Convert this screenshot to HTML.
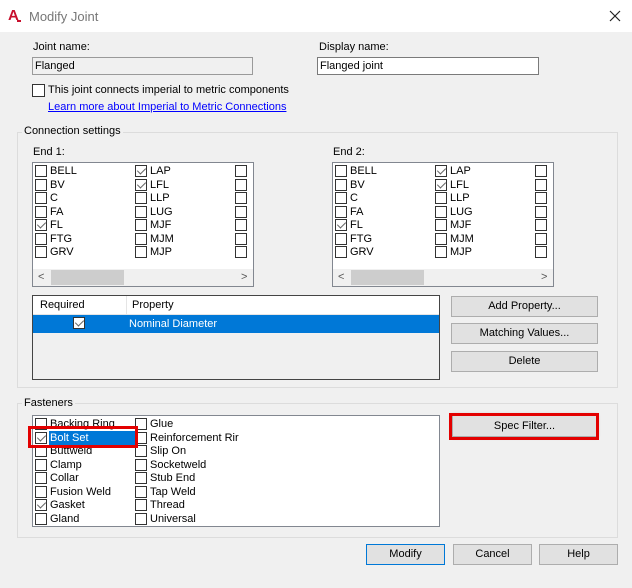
<!DOCTYPE html>
<html><head><style>
*{margin:0;padding:0;box-sizing:border-box}
body{width:632px;height:588px;background:#f0f0f0;font-family:"Liberation Sans",sans-serif;font-size:11px;color:#000;position:relative;overflow:hidden}
.a{position:absolute}
.t{position:absolute;white-space:nowrap;line-height:15px}
.cb{position:absolute;width:12px;height:12px;border:1px solid #333;background:#fff}
.ck::after{content:"";position:absolute;left:3px;top:0px;width:4px;height:7px;border:solid #666;border-width:0 1px 1px 0;transform:rotate(45deg)}
.btn{position:absolute;background:#e1e1e1;border:1px solid #adadad;text-align:center;line-height:19px;font-size:11px}
.grp{position:absolute;border:1px solid #dcdcdc}
.lb{position:absolute;background:#fff;border:1px solid #828790;overflow:hidden}
</style></head><body>
<div class="a" style="left:0;top:0;width:632px;height:32px;background:#fff"></div>
<div class="t" style="left:8px;top:8px;font-size:15px;font-weight:bold;color:#c8102e;line-height:16px">A</div>
<div class="a" style="left:17px;top:20px;width:4px;height:2px;background:#c8102e"></div>
<div class="t" style="left:29px;top:9px;font-size:13px;color:#777;line-height:16px">Modify Joint</div>
<svg class="a" style="left:609px;top:10px" width="12" height="12"><path d="M1 1L11 11M11 1L1 11" stroke="#222" stroke-width="1.2"/></svg>

<div class="t" style="left:33px;top:40px">Joint name:</div>
<div class="a" style="left:32px;top:57px;width:221px;height:18px;border:1px solid #9a9a9a;background:#f0f0f0"></div>
<div class="t" style="left:35px;top:59px">Flanged</div>
<div class="t" style="left:319px;top:40px">Display name:</div>
<div class="a" style="left:317px;top:57px;width:222px;height:18px;border:1px solid #7a7a7a;background:#fff"></div>
<div class="t" style="left:320px;top:59px">Flanged joint</div>
<div class="cb" style="left:32px;top:84px;width:13px;height:13px"></div>
<div class="t" style="left:48px;top:83px">This joint connects imperial to metric components</div>
<div class="t" style="left:48px;top:100px;color:#0000ff;text-decoration:underline">Learn more about Imperial to Metric Connections</div>

<div class="grp" style="left:17px;top:132px;width:601px;height:256px"></div>
<div class="t" style="left:22px;top:124px;background:#f0f0f0;padding:0 2px">Connection settings</div>
<div class="t" style="left:33px;top:145px">End 1:</div>
<div class="t" style="left:333px;top:145px">End 2:</div>

<!-- End1 -->
<div class="lb" style="left:32px;top:162px;width:222px;height:125px">
<div class="cb" style="left:2px;top:2px"></div><div class="t" style="left:17px;top:1px">BELL</div>
<div class="cb" style="left:2px;top:15.5px"></div><div class="t" style="left:17px;top:14.5px">BV</div>
<div class="cb" style="left:2px;top:29px"></div><div class="t" style="left:17px;top:28px">C</div>
<div class="cb" style="left:2px;top:42.5px"></div><div class="t" style="left:17px;top:41.5px">FA</div>
<div class="cb ck" style="left:2px;top:56px"></div><div class="t" style="left:17px;top:55px">FL</div>
<div class="cb" style="left:2px;top:69.5px"></div><div class="t" style="left:17px;top:68.5px">FTG</div>
<div class="cb" style="left:2px;top:83px"></div><div class="t" style="left:17px;top:82px">GRV</div>
<div class="cb ck" style="left:102px;top:2px"></div><div class="t" style="left:117px;top:1px">LAP</div>
<div class="cb ck" style="left:102px;top:15.5px"></div><div class="t" style="left:117px;top:14.5px">LFL</div>
<div class="cb" style="left:102px;top:29px"></div><div class="t" style="left:117px;top:28px">LLP</div>
<div class="cb" style="left:102px;top:42.5px"></div><div class="t" style="left:117px;top:41.5px">LUG</div>
<div class="cb" style="left:102px;top:56px"></div><div class="t" style="left:117px;top:55px">MJF</div>
<div class="cb" style="left:102px;top:69.5px"></div><div class="t" style="left:117px;top:68.5px">MJM</div>
<div class="cb" style="left:102px;top:83px"></div><div class="t" style="left:117px;top:82px">MJP</div>
<div class="cb" style="left:202px;top:2px"></div><div class="cb" style="left:202px;top:15.5px"></div><div class="cb" style="left:202px;top:29px"></div><div class="cb" style="left:202px;top:42.5px"></div><div class="cb" style="left:202px;top:56px"></div><div class="cb" style="left:202px;top:69.5px"></div><div class="cb" style="left:202px;top:83px"></div>
<div class="a" style="left:0;top:106px;width:220px;height:17px;background:#f0f0f0"></div>
<div class="a" style="left:18px;top:107px;width:73px;height:15px;background:#cdcdcd"></div>
<div class="t" style="left:5px;top:107px;color:#555">&lt;</div><div class="t" style="left:208px;top:107px;color:#555">&gt;</div>
</div>
<!-- End2 -->
<div class="lb" style="left:332px;top:162px;width:222px;height:125px">
<div class="cb" style="left:2px;top:2px"></div><div class="t" style="left:17px;top:1px">BELL</div>
<div class="cb" style="left:2px;top:15.5px"></div><div class="t" style="left:17px;top:14.5px">BV</div>
<div class="cb" style="left:2px;top:29px"></div><div class="t" style="left:17px;top:28px">C</div>
<div class="cb" style="left:2px;top:42.5px"></div><div class="t" style="left:17px;top:41.5px">FA</div>
<div class="cb ck" style="left:2px;top:56px"></div><div class="t" style="left:17px;top:55px">FL</div>
<div class="cb" style="left:2px;top:69.5px"></div><div class="t" style="left:17px;top:68.5px">FTG</div>
<div class="cb" style="left:2px;top:83px"></div><div class="t" style="left:17px;top:82px">GRV</div>
<div class="cb ck" style="left:102px;top:2px"></div><div class="t" style="left:117px;top:1px">LAP</div>
<div class="cb ck" style="left:102px;top:15.5px"></div><div class="t" style="left:117px;top:14.5px">LFL</div>
<div class="cb" style="left:102px;top:29px"></div><div class="t" style="left:117px;top:28px">LLP</div>
<div class="cb" style="left:102px;top:42.5px"></div><div class="t" style="left:117px;top:41.5px">LUG</div>
<div class="cb" style="left:102px;top:56px"></div><div class="t" style="left:117px;top:55px">MJF</div>
<div class="cb" style="left:102px;top:69.5px"></div><div class="t" style="left:117px;top:68.5px">MJM</div>
<div class="cb" style="left:102px;top:83px"></div><div class="t" style="left:117px;top:82px">MJP</div>
<div class="cb" style="left:202px;top:2px"></div><div class="cb" style="left:202px;top:15.5px"></div><div class="cb" style="left:202px;top:29px"></div><div class="cb" style="left:202px;top:42.5px"></div><div class="cb" style="left:202px;top:56px"></div><div class="cb" style="left:202px;top:69.5px"></div><div class="cb" style="left:202px;top:83px"></div>
<div class="a" style="left:0;top:106px;width:220px;height:17px;background:#f0f0f0"></div>
<div class="a" style="left:18px;top:107px;width:73px;height:15px;background:#cdcdcd"></div>
<div class="t" style="left:5px;top:107px;color:#555">&lt;</div><div class="t" style="left:208px;top:107px;color:#555">&gt;</div>
</div>

<!-- property table -->
<div class="a" style="left:32px;top:295px;width:408px;height:85px;border:1px solid #444;background:#f0f0f0">
<div class="a" style="left:0;top:0;width:406px;height:19px;background:#fff;border-bottom:1px solid #e5e5e5"></div>
<div class="a" style="left:93px;top:0;width:1px;height:19px;background:#e5e5e5"></div>
<div class="t" style="left:7px;top:2px">Required</div>
<div class="t" style="left:99px;top:2px">Property</div>
<div class="a" style="left:0;top:19px;width:406px;height:18px;background:#0078d7"></div>
<div class="cb ck" style="left:40px;top:21px;background:#fff"></div>
<div class="t" style="left:96px;top:21px;color:#fff">Nominal Diameter</div>
</div>
<div class="btn" style="left:451px;top:296px;width:147px;height:21px">Add Property...</div>
<div class="btn" style="left:451px;top:323px;width:147px;height:21px">Matching Values...</div>
<div class="btn" style="left:451px;top:351px;width:147px;height:21px">Delete</div>

<!-- Fasteners -->
<div class="grp" style="left:17px;top:403px;width:601px;height:135px"></div>
<div class="t" style="left:22px;top:396px;background:#f0f0f0;padding:0 2px">Fasteners</div>
<div class="lb" style="left:32px;top:415px;width:408px;height:112px">
<div class="cb" style="left:2px;top:2px"></div><div class="t" style="left:17px;top:1px">Backing Ring</div>
<div class="cb ck" style="left:2px;top:15.5px"></div><div class="a" style="left:16px;top:14.5px;width:86px;height:14px;background:#0078d7"></div><div class="t" style="left:17px;top:14.5px;color:#fff">Bolt Set</div>
<div class="cb" style="left:2px;top:29px"></div><div class="t" style="left:17px;top:28px">Buttweld</div>
<div class="cb" style="left:2px;top:42.5px"></div><div class="t" style="left:17px;top:41.5px">Clamp</div>
<div class="cb" style="left:2px;top:56px"></div><div class="t" style="left:17px;top:55px">Collar</div>
<div class="cb" style="left:2px;top:69.5px"></div><div class="t" style="left:17px;top:68.5px">Fusion Weld</div>
<div class="cb ck" style="left:2px;top:83px"></div><div class="t" style="left:17px;top:82px">Gasket</div>
<div class="cb" style="left:2px;top:96.5px"></div><div class="t" style="left:17px;top:95.5px">Gland</div>
<div class="cb" style="left:102px;top:2px"></div><div class="t" style="left:117px;top:1px">Glue</div>
<div class="cb" style="left:102px;top:15.5px"></div><div class="t" style="left:117px;top:14.5px">Reinforcement Rir</div>
<div class="cb" style="left:102px;top:29px"></div><div class="t" style="left:117px;top:28px">Slip On</div>
<div class="cb" style="left:102px;top:42.5px"></div><div class="t" style="left:117px;top:41.5px">Socketweld</div>
<div class="cb" style="left:102px;top:56px"></div><div class="t" style="left:117px;top:55px">Stub End</div>
<div class="cb" style="left:102px;top:69.5px"></div><div class="t" style="left:117px;top:68.5px">Tap Weld</div>
<div class="cb" style="left:102px;top:83px"></div><div class="t" style="left:117px;top:82px">Thread</div>
<div class="cb" style="left:102px;top:96.5px"></div><div class="t" style="left:117px;top:95.5px">Universal</div>
</div>
<div class="a" style="left:28px;top:426px;width:110px;height:22px;border:3px solid #e30000"></div>
<div class="btn" style="left:452px;top:415px;width:145px;height:22px;line-height:20px;box-shadow:0 0 3px #666">Spec Filter...</div>
<div class="a" style="left:449px;top:413px;width:150px;height:27px;border:3px solid #e30000"></div>

<div class="btn" style="left:366px;top:544px;width:79px;height:21px;border-color:#0078d7">Modify</div>
<div class="btn" style="left:453px;top:544px;width:79px;height:21px">Cancel</div>
<div class="btn" style="left:539px;top:544px;width:79px;height:21px">Help</div>
</body></html>
